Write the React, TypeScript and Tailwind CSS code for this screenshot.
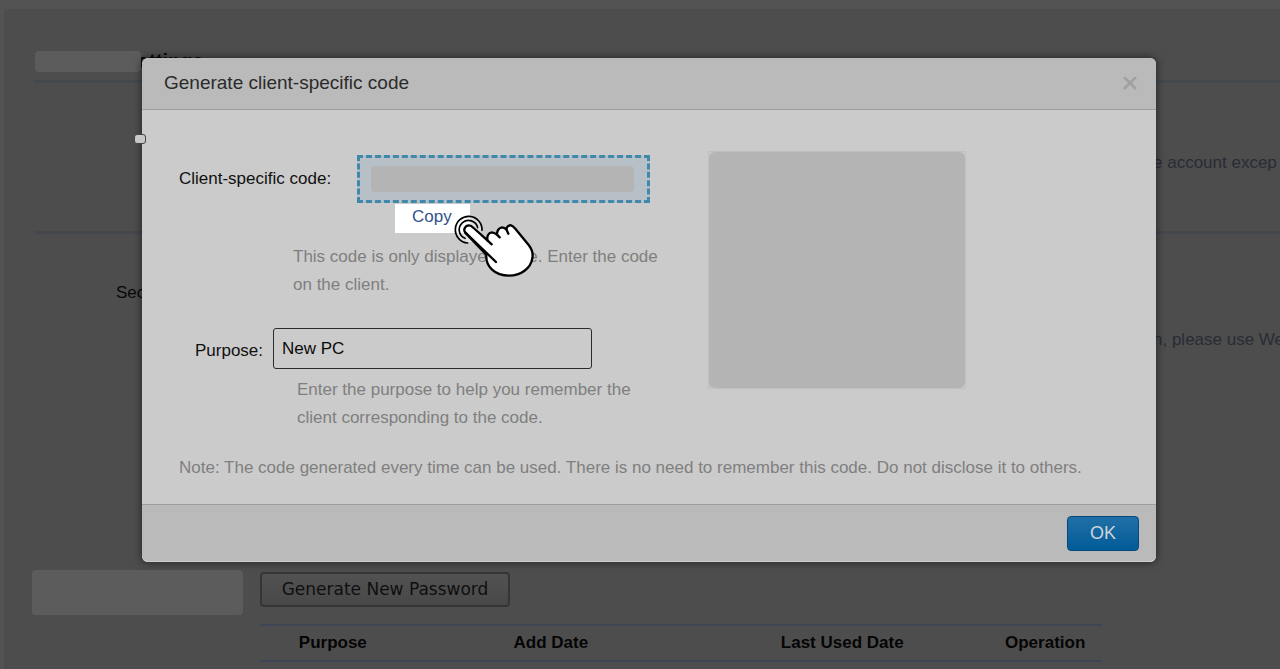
import React from "react";

function TapCursor() {
  return (
    <svg
      viewBox="0 0 300 240"
      className="pointer-events-none absolute top-px left-[50px] z-10 h-[80px] w-[100px]"
      fill="none"
      stroke="#000"
      strokeWidth="7"
      strokeLinecap="round"
      strokeLinejoin="round"
      aria-hidden="true"
    >
      <circle cx="71" cy="74" r="39" fill="#fff" stroke="none" opacity="0.4" />
      <path d="M68 114A40 40 0 1 1 111 76" strokeWidth="5" />
      <path d="M60 100A28 28 0 1 1 98 68" strokeWidth="5" />
      <path
        d="M61 83C54 75 60 61 72 61C78 61 82 65 86 69L128 107C124 94 131 83 140 82C146 82 151 85 156 89C155 78 162 68 171 67C176 67 180 70 184 73C185 65 192 60 198 61C203 62 207 66 211 71L251 120C262 134 265 145 262 160C257 190 228 212 192 212C150 212 121 185 124 149Z"
        fill="#fff"
      />
      <path d="M61 83L153 171M128 107L140 118M156 89L164 97M184 73L190 86" />
    </svg>
  );
}

function SettingsPage() {
  return (
    <main className="mt-[9px] ml-1 bg-[#4d4d4d] pt-10 pb-10 pl-[31px] text-[17px]">
      <header className="flex h-[34px] items-start border-b-3 border-[#44484d]">
        <div className="z-10 mt-0.5 h-[21px] w-[106px] rounded bg-[#5c5c5c]" />
        <h1 className="-ml-[3px] text-[20px] leading-[24px] font-bold text-[#080808]">ettings</h1>
      </header>
      <section className="flex h-[151px] justify-end overflow-hidden border-b-3 border-[#44484d] pt-[68px]">
        <p className="w-[127px] whitespace-nowrap leading-6 text-[#282c36]">e account excep</p>
      </section>
      <section className="flex h-[336px] justify-between overflow-hidden pt-[47px]">
        <p className="ml-[81px] leading-6 text-[#080808]">Sec</p>
        <p className="mt-[47px] w-[127px] whitespace-nowrap leading-6 text-[#282c36]">n, please use We</p>
      </section>
      <section className="-ml-[3px] flex items-start gap-[17px]">
        <div className="h-[45px] w-[211px] shrink-0 rounded bg-[#5c5c5c]" />
        <div className="mr-[178px] flex-1 pt-0.5">
          <button
            type="button"
            className="block h-[35px] w-[250px] rounded border-2 border-[#353535] bg-linear-to-b from-[#525252] to-[#484848] font-['DejaVu_Sans',sans-serif] text-[17px] whitespace-nowrap text-[#0f0f0f]"
          >
            Generate New Password
          </button>
          <table className="mt-[17px] w-full table-fixed border-collapse text-[#050505]">
            <thead>
              <tr className="h-[36px] border-y-2 border-[#3e4554]">
                <th className="w-[17.3%]">Purpose</th>
                <th className="w-[34.5%]">Add Date</th>
                <th className="w-[34.7%]">Last Used Date</th>
                <th>Operation</th>
              </tr>
            </thead>
          </table>
        </div>
      </section>
    </main>
  );
}

function CodeDialog() {
  return (
    <div
      role="dialog"
      aria-labelledby="dialog-title"
      className="rounded-md bg-[#cbcbcb] text-[17px] text-[#111] shadow-[0_0_8px_rgba(0,0,0,0.6)]"
    >
      <header className="flex h-[52px] items-center justify-between rounded-t-md border-b border-[#9e9e9e] bg-[#bababa] pr-[19px] pl-[22px]">
        <h2 id="dialog-title" className="text-[19px] text-[#2b2b2b]">
          Generate client-specific code
        </h2>
        <button type="button" aria-label="Close" className="flex size-[14px] items-center justify-center text-[#a0a0a0]">
          <svg viewBox="0 0 14 14" className="size-[14px]" stroke="currentColor" strokeWidth="2.6" aria-hidden="true">
            <path d="M1 0L13 12M13 0L1 12" />
          </svg>
        </button>
      </header>

      <div className="px-[37px] pt-[41px] pb-[22px]">
        <div className="flex">
          <div className="w-[529px] pt-1">
            <div className="flex items-start">
              <span className="w-[178px] leading-[48px]">Client-specific code:</span>
              <div>
                <div className="h-[48px] w-[293px] border-3 border-dashed border-[#4089aa] bg-[#b7bfc7] px-[11px] py-2">
                  <div className="h-[26px] w-[263px] rounded bg-[#b4b4b4]" />
                </div>
                <div className="relative mt-px ml-[38px] w-[75px]">
                  <a href="#copy" className="block h-[29px] bg-white pl-[17px] leading-[26px] text-[#335288]">
                    Copy
                  </a>
                  <TapCursor />
                </div>
              </div>
            </div>
            <p className="mt-[10px] ml-[114px] w-[380px] leading-[28px] text-[#7f7f7f]">
              This code is only displayed once. Enter the code on the client.
            </p>
            <div className="mt-[29px] flex items-center pl-[16px]">
              <label htmlFor="purpose" className="w-[78px] pt-1">
                Purpose:
              </label>
              <input
                id="purpose"
                type="text"
                defaultValue="New PC"
                className="h-[41px] w-[319px] rounded-[3px] border-[1px] border-[#2b2b2b] bg-transparent px-2 text-[#0a0a0a] outline-none"
              />
            </div>
            <p className="mt-[7px] ml-[118px] w-[360px] leading-[28px] text-[#7f7f7f]">
              Enter the purpose to help you remember the client corresponding to the code.
            </p>
          </div>
          <div className="h-[238px] w-[258px] border border-[#c0c0c0] bg-[#c8c8c8]">
            <div className="h-full rounded-md bg-[#b4b4b4]" />
          </div>
        </div>
        <p className="mt-[22px] leading-[28px] whitespace-nowrap text-[#7f7f7f]">
          Note: The code generated every time can be used. There is no need to remember this code. Do not disclose it to others.
        </p>
      </div>

      <footer className="flex h-[58px] items-center justify-end rounded-b-md border-t border-b border-t-[#9e9e9e] border-b-[#cfcfcf] bg-[#bababa] pr-[17px]">
        <button
          type="button"
          className="h-[35px] w-[72px] rounded border border-[#044a79] bg-linear-to-b from-[#1f70a6] to-[#005b98] text-[18px] text-[#cdd5da]"
        >
          OK
        </button>
      </footer>
    </div>
  );
}

export default function App() {
  return (
    <div className="relative h-screen overflow-hidden bg-[#535353] font-['Liberation_Sans',Arial,sans-serif]">
      <SettingsPage />
      <div className="absolute inset-0 z-20 pt-[58px] pr-[124px] pl-[142px]">
        <CodeDialog />
      </div>
      <span className="absolute top-[134px] left-[134px] z-30 h-[10px] w-[12px] rounded-[3px] border border-[#444] bg-[#c8c8c8]" />
    </div>
  );
}
